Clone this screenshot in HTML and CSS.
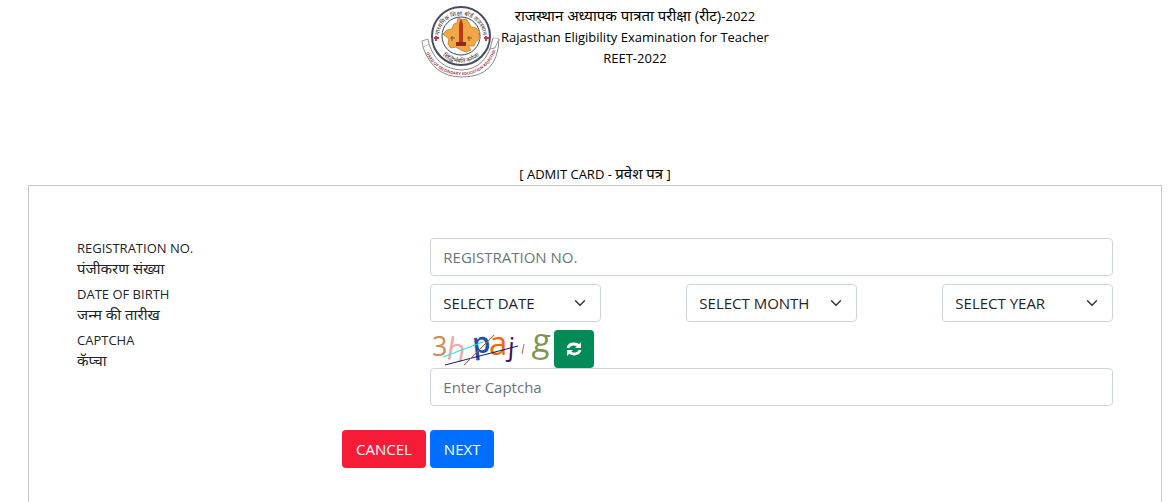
FILE: index.html
```html
<!DOCTYPE html>
<html lang="en">
<head>
  <meta charset="UTF-8">
  <meta name="viewport" content="width=device-width, initial-scale=1.0">
  <title>REET-2022 Admit Card</title>
  <link rel="stylesheet" href="styles.css">
</head>
<body>
  <header class="header">
    <svg class="logo" viewBox="0 0 80 80" role="img" aria-label="Board of Secondary Education Rajasthan">
      <defs>
        <path id="ring-top" d="M19 43 A22 22 0 1 1 61 43"/>
        <path id="ring-bottom" d="M17 49 A27 27 0 0 0 63 49"/>
        <path id="ribbon-text" d="M5 52 Q16 74 41 74 Q65 74 75 49"/>
      </defs>
      <path d="M2 46 L8 43 Q16 68 41 69 Q66 68 72 37 L78 38 Q77 76 41 76 Q12 76 2 46Z" fill="#fff" stroke="#8a8a8a"/>
      <path d="M2 46 L1 40 L7 38 L8 43 M78 38 L74 47 L69 48 L72 37" fill="#fff" stroke="#999"/>
      <circle cx="40" cy="35" r="29" fill="#fff" stroke="#4c4c5c" stroke-width="2"/>
      <circle cx="40" cy="35" r="19" fill="#fff" stroke="#3a3f5c" stroke-width="1"/>
      <text class="ring-text"><textPath href="#ring-top" startOffset="50%">माध्यमिक शिक्षा बोर्ड राजस्थान</textPath></text>
      <text class="ring-text"><textPath href="#ring-bottom" startOffset="50%">सिद्धिर्भवति कर्मजा</textPath></text>
      <path d="M37 17 L41 19 L45 18 L48 22 L50 26 L55 27 L59 31 L57 34 L59 38 L55 40 L53 45 L47 45 L50 49 L45 51 L40 49 L35 46 L30 47 L27 43 L28 38 L22 33 L26 29 L31 28 L33 23 L36 22Z" fill="#f2a846" stroke="#d08a30"/>
      <path d="M40 17 L42 23 V41 H38 V23Z" fill="#b83a1c"/>
      <path d="M35 41 H45 V45 H35Z" fill="#8c2c1c"/>
      <path d="M29 37 H34 M46 37 H51 M31 35 V40 M48 35 V40" stroke="#7d5b35"/>
      <path d="M13 37 H18 M15 35 V40 M63 37 H68 M65 35 V40" stroke="#c83848" stroke-width="2"/>
      <text class="ribbon-text"><textPath href="#ribbon-text" startOffset="50%">BOARD OF SECONDARY EDUCATION RAJASTHAN</textPath></text>
    </svg>
    <div class="header-text">
      <div><span class="hindi">राजस्थान अध्यापक पात्रता परीक्षा (रीट)</span>-2022</div>
      <div>Rajasthan Eligibility Examination for Teacher</div>
      <div>REET-2022</div>
    </div>
  </header>

  <div class="page-title">[ ADMIT CARD - <span class="hindi">प्रवेश पत्र</span> ]</div>

  <form class="form-box">
    <div class="row">
      <label class="col-label" for="regno">REGISTRATION NO.<br><span class="hindi">पंजीकरण संख्या</span></label>
      <div class="col-field">
        <input class="form-control" type="text" id="regno" placeholder="REGISTRATION NO.">
      </div>
    </div>

    <div class="row">
      <label class="col-label" for="dob-date">DATE OF BIRTH<br><span class="hindi">जन्म की तारीख</span></label>
      <div class="col-field dob">
        <select class="form-select" id="dob-date" aria-label="Date">
          <option>SELECT DATE</option>
        </select>
        <select class="form-select" id="dob-month" aria-label="Month">
          <option>SELECT MONTH</option>
        </select>
        <select class="form-select" id="dob-year" aria-label="Year">
          <option>SELECT YEAR</option>
        </select>
      </div>
    </div>

    <div class="row">
      <label class="col-label" for="captcha">CAPTCHA<br><span class="hindi">कॅप्चा</span></label>
      <div class="col-field">
        <div class="captcha">
          <svg class="captcha-image" viewBox="0 0 120 38" role="img" aria-label="Captcha">
            <text x="2" y="26" font-size="27" fill="#cd8b58">3</text>
            <text x="17" y="30" font-size="31" fill="#f2a8a8" transform="rotate(10 24 20)">h</text>
            <text x="43" y="23" font-size="29" font-weight="600" fill="#1f4fb0" transform="rotate(-6 50 20)">p</text>
            <text x="59" y="25" font-size="33" font-weight="500" fill="#fb6502">a</text>
            <text x="78" y="26" font-size="26" font-weight="500" fill="#4b0a5e" transform="rotate(4 80 20)">j</text>
            <text x="102" y="22" font-size="33" fill="#7f9455" transform="rotate(5 110 18)">g</text>
            <path d="M13 27 L53 12" stroke="#00f0f0"/>
            <path d="M15 35 L88 16" stroke="#0a1a78"/>
            <path d="M34 35 L64 5" stroke="#e8441c"/>
            <path d="M92 24 L94 14" stroke="#d06048"/>
          </svg>
          <button class="btn btn-refresh" type="button" aria-label="Refresh captcha">
            <svg viewBox="0 0 16 16" width="16" height="16" fill="none" stroke="currentColor" stroke-width="3">
              <path d="M2 7 Q3 3 8 3 Q11 3 13 5 M14 9 Q13 13 8 13 Q5 13 3 11"/>
              <path d="M15 1 V7 H9Z M1 15 V9 H7Z" fill="currentColor" stroke="none"/>
            </svg>
          </button>
        </div>
        <input class="form-control" type="text" id="captcha" placeholder="Enter Captcha">
      </div>
    </div>

    <div class="row">
      <div class="actions">
        <button class="btn btn-danger" type="reset">CANCEL</button>
        <button class="btn btn-primary" type="submit">NEXT</button>
      </div>
    </div>
  </form>
</body>
</html>
```
FILE: styles.css
```css
* {
  box-sizing: border-box;
}

body {
  margin: 0;
  padding: 6px 6px 0 28px;
  background: #fff;
  color: #212529;
  font-family: "Open Sans", "Noto Sans", sans-serif;
  font-size: 13px;
  line-height: 21px;
}

.hindi {
  font-size: 15px;
  line-height: 16px;
}

.header {
  display: flex;
  justify-content: center;
  min-height: 158px;
  color: #000;
  text-align: center;
}

.logo {
  width: 80px;
  height: 80px;
  margin-top: -5px;
}

.ring-text {
  font-size: 6px;
  fill: #333;
  text-anchor: middle;
}

.ribbon-text {
  font-size: 4px;
  font-weight: bold;
  fill: #a04858;
  text-anchor: middle;
}

.page-title {
  color: #000;
  text-align: center;
}

.form-box {
  padding: 52px 48px 48px;
  border: 1px solid #c8c8c8;
}

.row {
  display: flex;
  margin: 0 -12px 4px;
}

.col-label {
  width: 33.3333%;
  padding: 0 12px;
}

.col-field {
  width: 66.6667%;
  padding: 0 12px;
}

.dob {
  display: flex;
  justify-content: space-between;
  align-items: flex-start;
}

.form-control,
.form-select {
  display: block;
  width: 100%;
  height: 38px;
  padding: 0 12px;
  border: 1px solid #ced4da;
  border-radius: 4px;
  background: #fff;
  color: #212529;
  font-family: inherit;
  font-size: 15px;
}

.form-control::placeholder {
  color: #6c757d;
  opacity: 1;
}

.form-select {
  width: 25%;
  appearance: none;
  background-image: url("data:image/svg+xml,%3csvg xmlns='http://www.w3.org/2000/svg' viewBox='0 0 16 16'%3e%3cpath fill='none' stroke='%23343a40' stroke-linecap='round' stroke-linejoin='round' stroke-width='2' d='M2 5l6 6 6-6'/%3e%3c/svg%3e");
  background-repeat: no-repeat;
  background-position: right 14px center;
  background-size: 12px 12px;
}

.captcha {
  display: flex;
  gap: 4px;
}

.captcha-image {
  width: 120px;
  height: 38px;
  overflow: visible;
}

.btn {
  height: 38px;
  padding: 0 14px;
  border: 0;
  border-radius: 4px;
  color: #fff;
  font-family: inherit;
  font-size: 15px;
  cursor: pointer;
}

.btn-refresh {
  display: flex;
  align-items: center;
  justify-content: center;
  width: 40px;
  padding: 0;
  background: #028a57;
}

.btn-danger {
  background: #f61c37;
}

.btn-primary {
  background: #006fff;
}

.actions {
  display: flex;
  gap: 4px;
  margin-left: 25%;
  padding: 20px 12px 0;
}
```
